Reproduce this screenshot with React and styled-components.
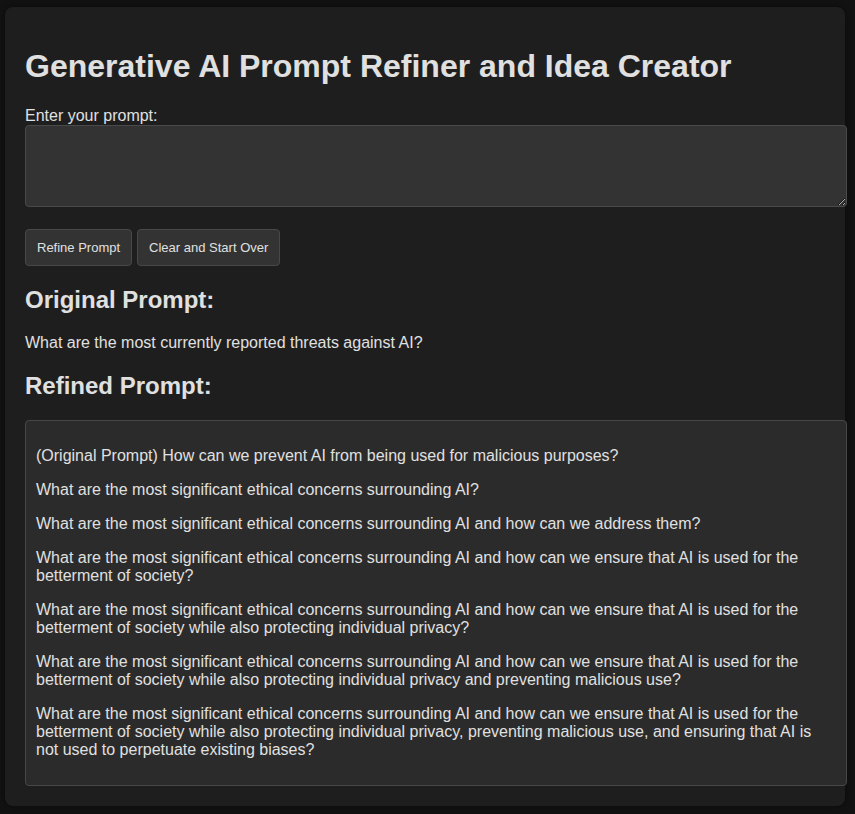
import styled, { createGlobalStyle } from "styled-components";

const GlobalStyle = createGlobalStyle`
  html, body {
    margin: 0;
    background-color: #121212;
    font-family: "Liberation Sans", Arial, sans-serif;
    color: #e0e0e0;
  }
`;

const Page = styled.div`
  padding: 7px 0 8px 5px;
`;

const Container = styled.div`
  width: 800px;
  padding: 20px;
  background-color: #1e1e1e;
  border-radius: 8px;
  box-shadow: 0 0 6px rgba(0, 0, 0, 0.5);
`;

const Title = styled.h1`
  font-size: 32px;
  font-weight: bold;
  margin: 21px 0 22px;
  color: #e0e0e0;
`;

const Label = styled.label`
  display: block;
  font-size: 16px;
  line-height: 18px;
`;

const PromptInput = styled.textarea`
  display: block;
  width: 100%;
  height: 60px;
  padding: 10px;
  margin: 0 0 22px;
  background-color: #333333;
  color: #e0e0e0;
  border: 1px solid #4a4a4a;
  border-radius: 4px;
  font-family: "Liberation Sans", Arial, sans-serif;
  font-size: 16px;
  resize: vertical;
`;

const ButtonRow = styled.div`
  display: flex;
  gap: 5px;
`;

const Button = styled.button`
  height: 37px;
  padding: 0 11px;
  background-color: #333333;
  color: #e0e0e0;
  border: 1px solid #484848;
  border-radius: 4px;
  font-family: "Liberation Sans", Arial, sans-serif;
  font-size: 13px;
  cursor: pointer;
`;

const SectionTitle = styled.h2`
  font-size: 24px;
  font-weight: bold;
  margin: 20px 0;
  color: #e0e0e0;
`;

const Text = styled.p`
  font-size: 16px;
  line-height: 18px;
  margin: 16px 0;
`;

const ResultBox = styled.div`
  width: 100%;
  margin-top: 20px;
  padding: 10px;
  background-color: #2b2b2b;
  border: 1px solid #474747;
  border-radius: 4px;
`;

const refined = [
  "(Original Prompt) How can we prevent AI from being used for malicious purposes?",
  "What are the most significant ethical concerns surrounding AI?",
  "What are the most significant ethical concerns surrounding AI and how can we address them?",
  "What are the most significant ethical concerns surrounding AI and how can we ensure that AI is used for the betterment of society?",
  "What are the most significant ethical concerns surrounding AI and how can we ensure that AI is used for the betterment of society while also protecting individual privacy?",
  "What are the most significant ethical concerns surrounding AI and how can we ensure that AI is used for the betterment of society while also protecting individual privacy and preventing malicious use?",
  "What are the most significant ethical concerns surrounding AI and how can we ensure that AI is used for the betterment of society while also protecting individual privacy, preventing malicious use, and ensuring that AI is not used to perpetuate existing biases?",
];

const App = () => {
  return (
    <Page>
      <GlobalStyle />
      <Container>
        <Title>Generative AI Prompt Refiner and Idea Creator</Title>
        <Label htmlFor="prompt">Enter your prompt:</Label>
        <PromptInput id="prompt" />
        <ButtonRow>
          <Button>Refine Prompt</Button>
          <Button>Clear and Start Over</Button>
        </ButtonRow>
        <SectionTitle>Original Prompt:</SectionTitle>
        <Text>What are the most currently reported threats against AI?</Text>
        <SectionTitle>Refined Prompt:</SectionTitle>
        <ResultBox>
          {refined.map((line, i) => (
            <Text key={i}>{line}</Text>
          ))}
        </ResultBox>
      </Container>
    </Page>
  );
};

export default App;
